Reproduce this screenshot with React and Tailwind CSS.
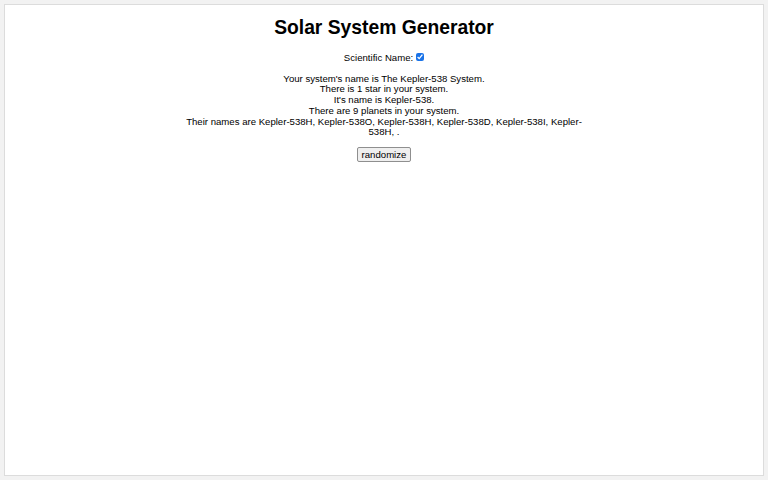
export default function App() {
  return (
    <div className="w-[768px] h-[480px] bg-[#f2f2f2] p-[4px]" style={{ fontFamily: '"Liberation Sans", Arial, sans-serif' }}>
      <div className="h-full bg-white border border-[#dcdcdc] flex flex-col items-center text-black">
        <h1 className="text-[19.3px] font-bold mt-[11px] leading-[24px]">Solar System Generator</h1>
        <div className="mt-[11.5px] text-[9.6px] leading-[11px] flex items-center">
          <span>Scientific Name:</span>
          <input type="checkbox" defaultChecked className="ml-[3px] w-[8px] h-[8px] m-0 accent-[#1a73e8]" />
        </div>
        <div className="mt-[11px] w-[400px] text-center text-[9.6px] leading-[10.8px]">
          <div>Your system's name is The Kepler-538 System.</div>
          <div>There is 1 star in your system.</div>
          <div>It's name is Kepler-538.</div>
          <div>There are 9 planets in your system.</div>
          <div>Their names are Kepler-538H, Kepler-538O, Kepler-538H, Kepler-538D, Kepler-538I, Kepler-538H, .</div>
        </div>
        <button className="mt-[8.5px] text-[9.6px] leading-[11px] px-[4px] py-[1px] bg-[#efefef] border border-[#8f8f8f] rounded-[2px]">randomize</button>
      </div>
    </div>
  );
}
